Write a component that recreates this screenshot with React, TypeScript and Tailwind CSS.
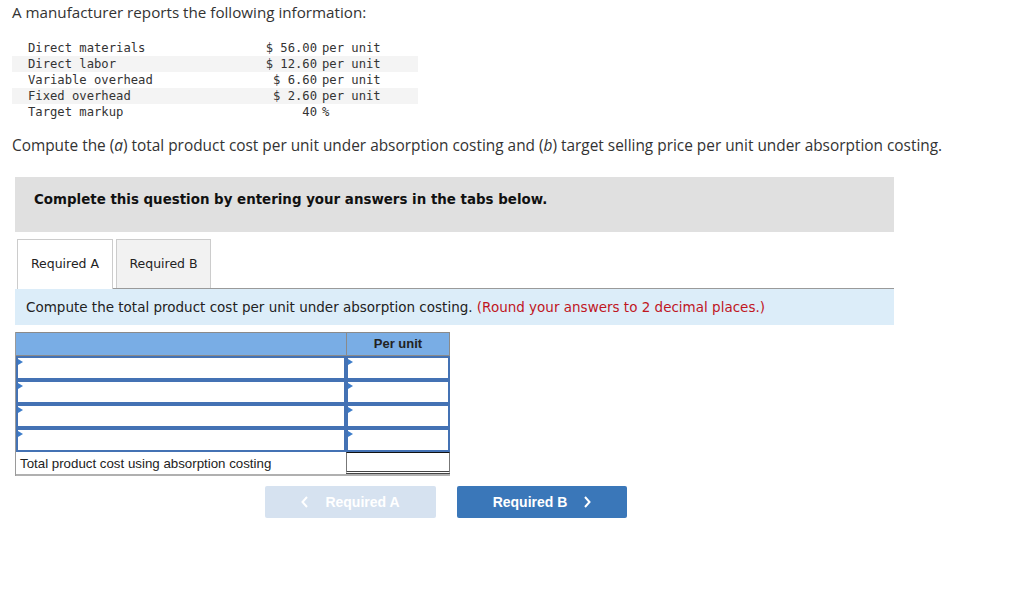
import React from 'react';

const data = [
  { label: 'Direct materials', value: '$ 56.00', unit: 'per unit' },
  { label: 'Direct labor', value: '$ 12.60', unit: 'per unit' },
  { label: 'Variable overhead', value: '$ 6.60', unit: 'per unit' },
  { label: 'Fixed overhead', value: '$ 2.60', unit: 'per unit' },
  { label: 'Target markup', value: '40', unit: '%' },
];

function Marker() {
  return (
    <span className="absolute left-0 top-[1px] h-0 w-0 border-y-[3px] border-l-[5px] border-y-transparent border-l-[#3d7cc9]" />
  );
}

function InputRow() {
  return (
    <div className="flex h-[24px]">
      <div className="relative w-[331px] border-2 border-[#4472b4] bg-white">
        <Marker />
      </div>
      <div className="relative w-[104px] border-2 border-[#4472b4] bg-white">
        <Marker />
      </div>
    </div>
  );
}

export default function App() {
  return (
    <div className="min-h-[589px] bg-white text-[#333]">
      <div className="px-3 pt-[3px] font-['Open_Sans',sans-serif]">
        {/* Question text */}
        <p className="text-[15.2px] leading-[18px] text-[#333]">
          A manufacturer reports the following information:
        </p>

        {/* Given data */}
        <div className="mt-[19px] w-[406px] font-['DejaVu_Sans_Mono',monospace] text-[12.2px] leading-4 text-[#333]">
          {data.map((row, i) => (
            <div key={row.label} className={`grid h-4 grid-cols-[253px_52px_101px] ${i % 2 === 1 ? 'bg-[#f4f4f4]' : ''}`}>
              <span className="pl-4">{row.label}</span>
              <span className="text-right">{row.value}</span>
              <span className="pl-[5px]">{row.unit}</span>
            </div>
          ))}
        </div>

        <p className="mt-[17px] text-[15.4px] leading-[18px]">
          Compute the (<i>a</i>) total product cost per unit under absorption costing and (<i>b</i>) target selling price per unit under absorption costing.
        </p>
      </div>

      {/* Answer widget */}
      <div className="ml-[15px] mt-[22px] w-[879px] font-['DejaVu_Sans',Verdana,sans-serif]">
        <div className="h-[55px] bg-[#e0e0e0] pl-[19px] pt-[15px] text-[13.4px] font-bold leading-4 text-[#111]">
          Complete this question by entering your answers in the tabs below.
        </div>

        {/* Tabs */}
        <div className="mt-[7px] flex h-[50px] items-stretch">
          <div className="w-[2px]" />
          <div className="flex w-[96px] items-center justify-center border-x border-t border-[#cccccc] bg-white text-[12.5px] text-[#222]">
            Required A
          </div>
          <div className="flex flex-1 items-stretch border-b border-[#9a9a9a] pl-[3px]">
            <div className="flex w-[95px] items-center justify-center border border-b-0 border-[#cccccc] bg-[#f2f2f2] text-[12.5px] text-[#222]">
              Required B
            </div>
          </div>
        </div>

        <div className="flex h-[36px] items-center bg-[#dcedf9] pl-[11px] text-[13.5px] text-[#222]">
          Compute the total product cost per unit under absorption costing.&nbsp;
          <span className="text-[#c0161f]">(Round your answers to 2 decimal places.)</span>
        </div>

        {/* Answer table */}
        <div className="mt-[7px] w-[435px] border-l border-[#9a9a9a] font-['Liberation_Sans',Arial,sans-serif]">
          <div className="flex h-[24px] border border-l-0 border-[#8a8a8a] bg-[#79ade5]">
            <div className="w-[331px] border-r border-[#8a8a8a]" />
            <div className="flex flex-1 items-center justify-center text-[13px] font-bold text-[#222]">Per unit</div>
          </div>
          <InputRow />
          <InputRow />
          <InputRow />
          <InputRow />
          <div className="flex h-[24px] border-b-2 border-[#b0b0b0]">
            <div className="flex w-[331px] items-center pl-[4px] pt-[1px] text-[13.3px] text-[#222]">
              Total product cost using absorption costing
            </div>
            <div className="w-[104px] border-x border-t border-b-[3px] border-double border-x-[#777] border-t-[#111] border-b-[#444] bg-white" />
          </div>
        </div>

        {/* Navigation buttons */}
        <div className="mt-[10px] flex gap-[21px] pl-[250px] font-['Liberation_Sans',Arial,sans-serif] text-[14px] font-bold text-white">
          <button className="flex h-[32px] w-[171px] items-center justify-center gap-[16px] rounded-[2px] bg-[#d6e2f0]">
            <svg width="8" height="12" viewBox="0 0 8 12" fill="none" stroke="white" strokeWidth="2">
              <path d="M6 1 L1.5 6 L6 11" />
            </svg>
            Required A
          </button>
          <button className="flex h-[32px] w-[170px] items-center justify-center gap-[16px] rounded-[2px] bg-[#3a77b9]">
            Required B
            <svg width="8" height="12" viewBox="0 0 8 12" fill="none" stroke="white" strokeWidth="2">
              <path d="M2 1 L6.5 6 L2 11" />
            </svg>
          </button>
        </div>
      </div>
    </div>
  );
}
